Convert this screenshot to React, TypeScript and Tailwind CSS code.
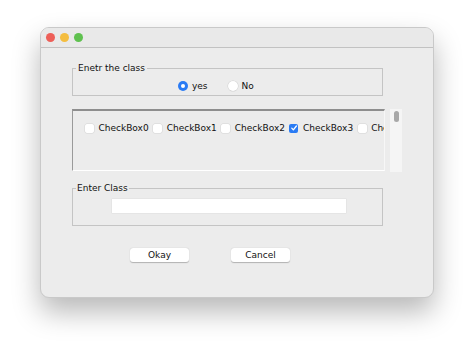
const font = "font-['DejaVu_Sans',sans-serif]"

export default function App(): React.JSX.Element {
  return (
    <div className={`h-[351px] w-[474px] overflow-hidden bg-white pt-[27px] pl-[40px] ${font}`}>
      <div className="flex h-[271px] w-[394px] flex-col overflow-hidden rounded-[9px] border border-[#c9c9c9] bg-[#ececec] shadow-[0_14px_28px_rgba(0,0,0,0.28)]">
        <TitleBar />
        <div className="flex flex-col pt-[14px] pl-[31px] text-[9px] leading-[12px] text-[#111]">
          <fieldset className="w-[311px] border border-[#c4c4c4] pb-[3px]">
            <legend className="ml-[3px] px-[2px]">Enetr the class</legend>
            <div className="mt-[6px] flex items-center pl-[105px]">
              <Radio checked label="yes" />
              <div className="w-[20px]" />
              <Radio checked={false} label="No" />
            </div>
          </fieldset>

          <div className="mt-[13px] flex gap-[5px]">
            <div className="h-[62px] w-[313px] overflow-hidden border-t-2 border-l border-t-[#8e8e8e] border-l-[#9a9a9a] border-b border-r border-b-white border-r-[#f7f7f7] pt-[11px] pl-[12px]">
              <div className="flex items-center whitespace-nowrap">
                {['CheckBox0', 'CheckBox1', 'CheckBox2', 'CheckBox3', 'CheckBox4'].map((name) => (
                  <CheckBox key={name} label={name} checked={name === 'CheckBox3'} />
                ))}
              </div>
            </div>
            <div className="flex h-[63px] w-[12px] justify-center bg-[#f5f5f5] pt-[2px]">
              <div className="h-[11px] w-[5px] rounded-full bg-[#a8a8a8]" />
            </div>
          </div>

          <fieldset className="mt-[10px] w-[311px] border border-[#c4c4c4] pb-[12px]">
            <legend className="ml-[3px] px-[1px]">Enter Class</legend>
            <div className="mt-[5px] ml-[39px] h-[14px] w-[234px] bg-white shadow-[0_0_0_0.5px_rgba(0,0,0,0.06)]" />
          </fieldset>

          <div className="mt-[22px] flex gap-[42px] pl-[58px]">
            <Button label="Okay" />
            <Button label="Cancel" />
          </div>
        </div>
      </div>
    </div>
  )
}

function TitleBar(): React.JSX.Element {
  return (
    <div className="flex h-[20px] shrink-0 items-center gap-[5px] border-b border-[#c2c2c2] bg-[#e9e9e9] pl-[5px]">
      <div className="h-[9px] w-[9px] rounded-full bg-[#ed5f58]" />
      <div className="h-[9px] w-[9px] rounded-full bg-[#f4bd3f]" />
      <div className="h-[9px] w-[9px] rounded-full bg-[#5fc14f]" />
    </div>
  )
}

function Radio({ checked, label }: { readonly checked: boolean; readonly label: string }): React.JSX.Element {
  return (
    <div className="flex items-center gap-[4px]">
      {checked ? (
        <div className="flex h-[10px] w-[10px] items-center justify-center rounded-full bg-[#2a7bf4]">
          <div className="h-[4px] w-[4px] rounded-full bg-white" />
        </div>
      ) : (
        <div className="h-[10px] w-[10px] rounded-full bg-white shadow-[0_0_0_0.5px_rgba(0,0,0,0.12)]" />
      )}
      <span>{label}</span>
    </div>
  )
}

function CheckBox({ checked, label }: { readonly checked: boolean; readonly label: string }): React.JSX.Element {
  return (
    <div className="mr-[4.5px] flex shrink-0 items-center gap-[4.5px]">
      {checked ? (
        <div className="flex h-[9px] w-[9px] items-center justify-center rounded-[2px] bg-[#2a7bf4]">
          <svg viewBox="0 0 10 10" className="h-[8px] w-[8px]" fill="none" stroke="white" strokeWidth="1.6" strokeLinecap="round" strokeLinejoin="round">
            <path d="M2.2 5.2l2 2.1 3.8-4.8" />
          </svg>
        </div>
      ) : (
        <div className="h-[9px] w-[9px] rounded-[2px] bg-white shadow-[0_0_0_0.5px_rgba(0,0,0,0.1)]" />
      )}
      <span>{label}</span>
    </div>
  )
}

function Button({ label }: { readonly label: string }): React.JSX.Element {
  return (
    <button
      type="button"
      className="flex h-[14px] w-[59px] items-center justify-center rounded-[3px] bg-white text-[9px] leading-none text-[#111] shadow-[0_0.5px_1px_rgba(0,0,0,0.25)]"
    >
      {label}
    </button>
  )
}
